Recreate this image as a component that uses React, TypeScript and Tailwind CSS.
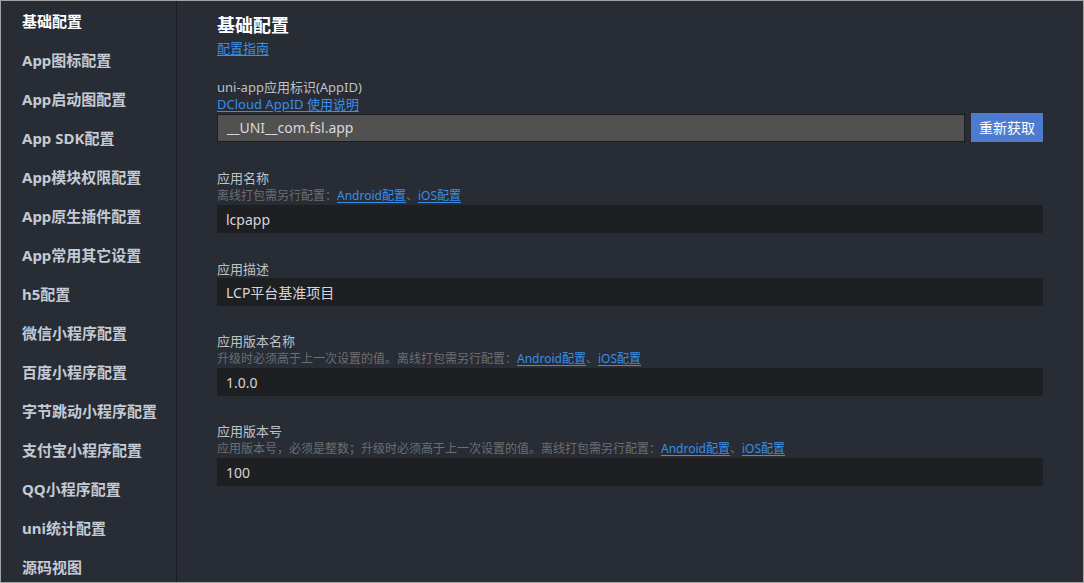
import React from "react";

const menu = [
  "基础配置",
  "App图标配置",
  "App启动图配置",
  "App SDK配置",
  "App模块权限配置",
  "App原生插件配置",
  "App常用其它设置",
  "h5配置",
  "微信小程序配置",
  "百度小程序配置",
  "字节跳动小程序配置",
  "支付宝小程序配置",
  "QQ小程序配置",
  "uni统计配置",
  "源码视图",
];

const font = "font-['Noto_Sans','Noto_Sans_CJK_SC',sans-serif]";

function Links() {
  return (
    <>
      <a className="text-[#3a8ee6] underline underline-offset-2 cursor-pointer">Android配置</a>
      <span>、</span>
      <a className="text-[#3a8ee6] underline underline-offset-2 cursor-pointer">iOS配置</a>
    </>
  );
}

function Field({ value }: { value: string }) {
  return (
    <div className="h-[28px] bg-[#1e1f23] px-[9px] flex items-center text-[14px] text-[#d6d6d6]">
      {value}
    </div>
  );
}

export default function App() {
  return (
    <div className={`w-[1084px] h-[583px] border border-[#a3a3a3] bg-[#282c35] flex overflow-hidden ${font}`}>
      {/* sidebar */}
      <div className="w-[176px] shrink-0 border-r border-[#1b1d22] pt-[1px] pl-[21px]">
        {menu.map((m, i) => (
          <div
            key={m}
            className={`h-[39px] flex items-center text-[15px] font-bold ${i === 0 ? "text-white" : "text-[#c3cad4]"}`}
          >
            {m}
          </div>
        ))}
      </div>

      {/* content */}
      <div className="flex-1 pl-[40px] pr-[40px] pt-[12px]">
        <div className="text-[18px] leading-[24px] font-bold text-white">基础配置</div>
        <div className="mt-[2px] text-[13px] leading-[18px]">
          <a className="text-[#3a8ee6] underline underline-offset-2 cursor-pointer">配置指南</a>
        </div>

        <div className="mt-[22px] text-[13px] leading-[17px] text-[#bfc1c5]">uni-app应用标识(AppID)</div>
        <div className="text-[13px] leading-[17px]">
          <a className="text-[#3a8ee6] underline underline-offset-2 cursor-pointer">DCloud AppID 使用说明</a>
        </div>
        <div className="flex items-center gap-[6px] h-[29px]">
          <div className="flex-1 h-[28px] bg-[#525151] border border-[#1d1e22] px-[9px] flex items-center text-[14px] text-[#d8d8d8]">
            __UNI__com.fsl.app
          </div>
          <button className="w-[72px] h-[29px] bg-[#4d7bd1] text-white text-[14px]">重新获取</button>
        </div>

        <div className="mt-[27px] text-[13px] leading-[18px] text-[#bfc1c5]">应用名称</div>
        <div className="text-[12px] leading-[18px] text-[#6d6e72]">
          离线打包需另行配置：<Links />
        </div>
        <Field value="lcpapp" />

        <div className="mt-[27px] text-[13px] leading-[18px] text-[#bfc1c5]">应用描述</div>
        <Field value="LCP平台基准项目" />

        <div className="mt-[26px] text-[13px] leading-[18px] text-[#bfc1c5]">应用版本名称</div>
        <div className="text-[12px] leading-[18px] text-[#6d6e72]">
          升级时必须高于上一次设置的值。离线打包需另行配置：<Links />
        </div>
        <Field value="1.0.0" />

        <div className="mt-[26px] text-[13px] leading-[18px] text-[#bfc1c5]">应用版本号</div>
        <div className="text-[12px] leading-[18px] text-[#6d6e72]">
          应用版本号，必须是整数；升级时必须高于上一次设置的值。离线打包需另行配置：<Links />
        </div>
        <Field value="100" />
      </div>
    </div>
  );
}
